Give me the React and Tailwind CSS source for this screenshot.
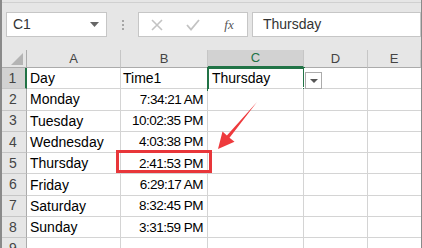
import React from 'react'

const rows = [
  ['Day', 'Time1'],
  ['Monday', '7:34:21 AM'],
  ['Tuesday', '10:02:35 PM'],
  ['Wednesday', '4:03:38 PM'],
  ['Thursday', '2:41:53 PM'],
  ['Friday', '6:29:17 AM'],
  ['Saturday', '8:32:45 PM'],
  ['Sunday', '3:31:59 PM'],
  ['', ''],
]

const cols = ['A', 'B', 'C', 'D', 'E']

function App() {
  return (
    <div
      className="relative w-[422px] h-[248px] overflow-hidden bg-[#e6e6e6] border-l-2 border-r border-[#8a8a8a]"
      style={{ fontFamily: '"Liberation Sans", Arial, sans-serif' }}
    >
      {/* Formula bar */}
      <div className="h-[48px] border-t border-[#d0d0d0] mt-[2px] flex items-start pt-[9px]">
        <div className="ml-[4px] w-[101px] h-[25px] bg-white border border-[#c6c6c6] flex items-center justify-between pl-[6px] pr-[7px]">
          <span className="text-[14px] text-[#333]">C1</span>
          <svg width="9" height="5" viewBox="0 0 9 5">
            <path d="M0 0 L9 0 L4.5 5 Z" fill="#666" />
          </svg>
        </div>
        <div className="w-[31px] h-[25px] flex flex-col items-center justify-center gap-[2px]">
          <span className="w-[2px] h-[2px] bg-[#a6a6a6]" />
          <span className="w-[2px] h-[2px] bg-[#a6a6a6]" />
          <span className="w-[2px] h-[2px] bg-[#a6a6a6]" />
        </div>
        <div className="w-[110px] h-[25px] bg-white border border-[#c6c6c6] flex items-center">
          <div className="w-[36px] flex justify-center">
            <svg width="12" height="12" viewBox="0 0 12 12">
              <path d="M1 1 L11 11 M11 1 L1 11" stroke="#c3c3c3" strokeWidth="1.6" />
            </svg>
          </div>
          <div className="w-[36px] flex justify-center">
            <svg width="14" height="12" viewBox="0 0 14 12">
              <path d="M1 6 L5 10.5 L13 1" stroke="#c3c3c3" strokeWidth="1.8" fill="none" />
            </svg>
          </div>
          <div className="flex-1 flex justify-center">
            <span
              className="italic text-[13px] text-[#555]"
              style={{ fontFamily: '"Liberation Serif", serif' }}
            >
              fx
            </span>
          </div>
        </div>
        <div className="ml-[4px] flex-1 h-[25px] bg-white border border-[#c6c6c6] flex items-center pl-[10px]">
          <span className="text-[14px] text-[#333]">Thursday</span>
        </div>
      </div>

      {/* Sheet grid */}
      <div className="-ml-[2px] grid grid-cols-[27px_94px_87px_96px_64px_1fr] text-[14px]">
        {/* header row */}
        <div className="h-[18px] bg-[#e6e6e6] border-r border-b border-[#ababab] flex items-end justify-end pr-[3px] pb-[2px]">
          <svg width="12" height="12" viewBox="0 0 12 12">
            <path d="M12 0 L12 12 L0 12 Z" fill="#b4b4b4" />
          </svg>
        </div>
        {cols.map((c) => (
          <div
            key={c}
            className={
              c === 'C'
                ? 'h-[18px] bg-[#d2d2d2] border-r border-[#c6c6c6] border-b-2 border-b-[#217346] flex items-center justify-center text-[#217346] text-[13px]'
                : 'h-[18px] bg-[#e6e6e6] border-r border-[#c6c6c6] border-b border-b-[#ababab] flex items-center justify-center text-[#444] text-[13px]'
            }
          >
            {c}
          </div>
        ))}

        {rows.map((r, i) => (
          <React.Fragment key={i}>
            <div
              className={
                i === 0
                  ? 'h-[21.3px] bg-[#d2d2d2] border-r-2 border-r-[#217346] border-b border-b-[#c6c6c6] flex items-center justify-center text-[#444]'
                  : 'h-[21.3px] bg-[#e6e6e6] border-r border-r-[#ababab] border-b border-b-[#c6c6c6] flex items-center justify-center text-[#444]'
              }
            >
              {i + 1}
            </div>
            <div className="h-[21.3px] bg-white border-r border-b border-[#d4d4d4] flex items-center pl-[3px] pt-[1px] text-black">
              {r[0]}
            </div>
            {i === 0 ? (
              <div className="h-[21.3px] bg-white border-r border-b border-[#d4d4d4] flex items-center pl-[2px] pt-[1px] text-black">
                {r[1]}
              </div>
            ) : (
              <div className="h-[21.3px] bg-white border-r border-b border-[#d4d4d4] flex items-center justify-end pr-[4px] pt-[1px] text-black text-[13.5px] tracking-[-0.5px]">
                {r[1]}
              </div>
            )}
            <div className="relative h-[21.3px] bg-white border-r border-b border-[#d4d4d4] flex items-center pl-[4px] pt-[1px] text-black">
              {i === 0 && (
                <>
                  <span>Thursday</span>
                  <div className="absolute -left-[1px] -top-[1px] w-[98px] h-[24px] border-2 border-[#217346]" />
                  <div className="absolute left-[94px] top-[19px] w-[5px] h-[5px] bg-[#217346] border border-white" />
                </>
              )}
            </div>
            <div className="relative h-[21.3px] bg-white border-r border-b border-[#d4d4d4]">
              {i === 0 && (
                <div className="absolute left-[1px] top-[4px] w-[17px] h-[17px] bg-white border border-[#ababab] flex items-center justify-center">
                  <svg width="8" height="4" viewBox="0 0 8 4">
                    <path d="M0 0 L8 0 L4 4 Z" fill="#555" />
                  </svg>
                </div>
              )}
            </div>
            <div className="h-[21.3px] bg-white border-b border-[#d4d4d4]" />
          </React.Fragment>
        ))}
      </div>

      {/* Annotation: red box and arrow */}
      <div className="absolute left-[114px] top-[150px] w-[96px] h-[23px] border-[3px] border-[#e8363a]" />
      <svg className="absolute left-0 top-0" width="422" height="248" viewBox="0 0 422 248">
        <polygon
          points="255,102 227.5,137.8 232.5,141.8 216,149 220.5,131.6 224.9,135.4"
          fill="#ee3a3d"
        />
      </svg>
    </div>
  )
}

export default App
